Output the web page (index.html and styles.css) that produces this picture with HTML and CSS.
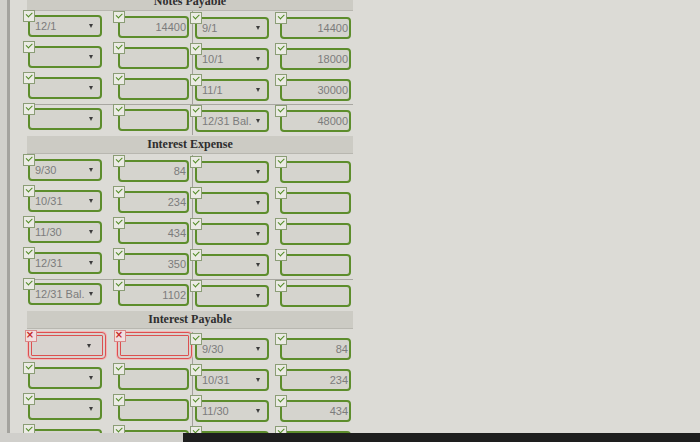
FILE: index.html
```html
<!DOCTYPE html>
<html>
<head>
<meta charset="utf-8">
<title>T-Accounts</title>
<link rel="stylesheet" href="styles.css">
</head>
<body>
<div class="page">
  <div class="rail"><div class="rail-edge"></div><div class="rail-line"></div></div>
  <div class="ledger">

    <section class="acct np">
      <div class="acct-head">Notes Payable</div>
      <div class="rows">
        <div class="row">
          <div class="half l">
            <div class="box sel c1"><span>12/1</span><i class="arr"></i></div>
            <div class="box inp c2">14400</div>
          </div>
          <div class="half r">
            <div class="box sel c3"><span>9/1</span><i class="arr"></i></div>
            <div class="box inp c4">14400</div>
          </div>
        </div>
        <div class="row">
          <div class="half l">
            <div class="box sel c1"><span></span><i class="arr"></i></div>
            <div class="box inp c2"></div>
          </div>
          <div class="half r">
            <div class="box sel c3"><span>10/1</span><i class="arr"></i></div>
            <div class="box inp c4">18000</div>
          </div>
        </div>
        <div class="row">
          <div class="half l">
            <div class="box sel c1"><span></span><i class="arr"></i></div>
            <div class="box inp c2"></div>
          </div>
          <div class="half r">
            <div class="box sel c3"><span>11/1</span><i class="arr"></i></div>
            <div class="box inp c4">30000</div>
          </div>
        </div>
        <div class="row bal">
          <div class="half l">
            <div class="box sel c1"><span></span><i class="arr"></i></div>
            <div class="box inp c2"></div>
          </div>
          <div class="half r">
            <div class="box sel c3"><span>12/31 Bal.</span><i class="arr"></i></div>
            <div class="box inp c4">48000</div>
          </div>
        </div>
      </div>
    </section>

    <section class="acct ie">
      <div class="acct-head">Interest Expense</div>
      <div class="rows">
        <div class="row">
          <div class="half l">
            <div class="box sel c1"><span>9/30</span><i class="arr"></i></div>
            <div class="box inp c2">84</div>
          </div>
          <div class="half r">
            <div class="box sel c3"><span></span><i class="arr"></i></div>
            <div class="box inp c4"></div>
          </div>
        </div>
        <div class="row">
          <div class="half l">
            <div class="box sel c1"><span>10/31</span><i class="arr"></i></div>
            <div class="box inp c2">234</div>
          </div>
          <div class="half r">
            <div class="box sel c3"><span></span><i class="arr"></i></div>
            <div class="box inp c4"></div>
          </div>
        </div>
        <div class="row">
          <div class="half l">
            <div class="box sel c1"><span>11/30</span><i class="arr"></i></div>
            <div class="box inp c2">434</div>
          </div>
          <div class="half r">
            <div class="box sel c3"><span></span><i class="arr"></i></div>
            <div class="box inp c4"></div>
          </div>
        </div>
        <div class="row">
          <div class="half l">
            <div class="box sel c1"><span>12/31</span><i class="arr"></i></div>
            <div class="box inp c2">350</div>
          </div>
          <div class="half r">
            <div class="box sel c3"><span></span><i class="arr"></i></div>
            <div class="box inp c4"></div>
          </div>
        </div>
        <div class="row bal">
          <div class="half l">
            <div class="box sel c1"><span>12/31 Bal.</span><i class="arr"></i></div>
            <div class="box inp c2">1102</div>
          </div>
          <div class="half r">
            <div class="box sel c3"><span></span><i class="arr"></i></div>
            <div class="box inp c4"></div>
          </div>
        </div>
      </div>
    </section>

    <section class="acct ip">
      <div class="acct-head">Interest Payable</div>
      <div class="rows">
        <div class="row">
          <div class="half l">
            <div class="box sel c1 err"><span></span><i class="arr"></i></div>
            <div class="box inp c2 err"></div>
          </div>
          <div class="half r">
            <div class="box sel c3"><span>9/30</span><i class="arr"></i></div>
            <div class="box inp c4">84</div>
          </div>
        </div>
        <div class="row">
          <div class="half l">
            <div class="box sel c1"><span></span><i class="arr"></i></div>
            <div class="box inp c2"></div>
          </div>
          <div class="half r">
            <div class="box sel c3"><span>10/31</span><i class="arr"></i></div>
            <div class="box inp c4">234</div>
          </div>
        </div>
        <div class="row">
          <div class="half l">
            <div class="box sel c1"><span></span><i class="arr"></i></div>
            <div class="box inp c2"></div>
          </div>
          <div class="half r">
            <div class="box sel c3"><span>11/30</span><i class="arr"></i></div>
            <div class="box inp c4">434</div>
          </div>
        </div>
        <div class="row">
          <div class="half l">
            <div class="box sel c1"><span></span><i class="arr"></i></div>
            <div class="box inp c2"></div>
          </div>
          <div class="half r">
            <div class="box sel c3"><span></span><i class="arr"></i></div>
            <div class="box inp c4"></div>
          </div>
        </div>
      </div>
    </section>

  </div>
</div>
<div class="screen-edge"><div class="edge-light"></div><div class="edge-dark"></div></div>
</body>
</html>
```

FILE: styles.css
```css
* { box-sizing: border-box; }

html, body {
  margin: 0;
  height: 442px;
  overflow: hidden;
}

body {
  background: #dcdbd6;
  font-family: "Liberation Sans", Arial, sans-serif;
}

.page {
  display: flex;
  align-items: flex-start;
  height: 442px;
}

.rail {
  width: 27px;
  height: 442px;
  flex: none;
  display: flex;
}

.rail-edge {
  width: 7px;
  background: #d1d0cb;
}

.rail-line {
  width: 3px;
  background: #a4a39e;
}

.ledger {
  width: 326px;
  flex: none;
  margin-top: -7px;
}

.acct-head {
  height: 18px;
  background: #cccbc4;
  border-bottom: 1px solid #b8b7b0;
  text-align: center;
  font: bold 12px/17px "Liberation Serif", "Times New Roman", serif;
  color: #2e2e2e;
}

.acct + .acct .acct-head { margin-top: 1px; }

.ie .rows { padding-top: 1px; }
.ip .rows { padding-top: 3px; }

.row {
  display: flex;
  height: 31px;
}

.row.bal { box-shadow: inset 0 1px 0 #a8a7a1; }

.half {
  display: flex;
  align-items: flex-start;
}

.half.l {
  width: 165px;
  padding-left: 1px;
  gap: 16px;
}

.half.r {
  width: 161px;
  padding-left: 2px;
  gap: 11px;
  border-left: 1px solid #a2a19b;
}

.box {
  position: relative;
  height: 22px;
  margin-top: 4px;
  border: 2px solid #5d8d2c;
  border-radius: 4px;
  background: #d5d4ce;
  color: #7c7c7c;
  font-size: 11px;
  line-height: 18px;
  white-space: nowrap;
}

.c2 { margin-top: 5px; }
.c3, .c4 { margin-top: 6px; }

.box::before {
  content: "";
  position: absolute;
  left: -7px;
  top: -7px;
  width: 10px;
  height: 10px;
  background: #ebebe4;
  border: 1px solid #8b9d76;
}

.box::after {
  content: "";
  position: absolute;
  left: -4px;
  top: -5px;
  width: 5px;
  height: 2.5px;
  border-left: 1.4px solid #4f8a22;
  border-bottom: 1.4px solid #4f8a22;
  transform: rotate(-45deg);
}

.sel {
  width: 74px;
  display: flex;
  justify-content: space-between;
  padding-left: 5px;
  padding-right: 7px;
}

.arr {
  flex: none;
  width: 0;
  height: 0;
  margin-top: 7px;
  border-left: 2.5px solid transparent;
  border-right: 2.5px solid transparent;
  border-top: 4px solid #3c3c3c;
}

.inp {
  width: 71px;
  text-align: right;
  padding-right: 1px;
}

.box.err {
  height: 27px;
  margin-top: 0;
  border: 4px double #dc5050;
  box-shadow: 0 0 0 1px #f2b6b6;
  border-radius: 4px;
  background: #d8d3cf;
}

.sel.err { width: 78px; padding-right: 11px; }
.sel.err .arr { margin-top: 8px; }

.inp.err {
  width: 75px;
  margin-left: -5px;
}

.box.err::before {
  left: -7px;
  top: -6px;
  background: #f2dede;
  border-color: #d98a8a;
}

.box.err::after {
  content: "\00d7";
  left: -7px;
  top: -6px;
  width: 10px;
  height: 10px;
  border: 0;
  transform: none;
  color: #c62828;
  font: bold 10px/10px "DejaVu Sans", sans-serif;
  text-align: center;
}

.screen-edge {
  position: fixed;
  left: 0;
  right: 0;
  bottom: 0;
  height: 9px;
  display: flex;
}

.edge-light {
  width: 183px;
  background: #d0cfcb;
}

.edge-dark {
  flex: 1;
  background: #1e1e1e;
}
```
